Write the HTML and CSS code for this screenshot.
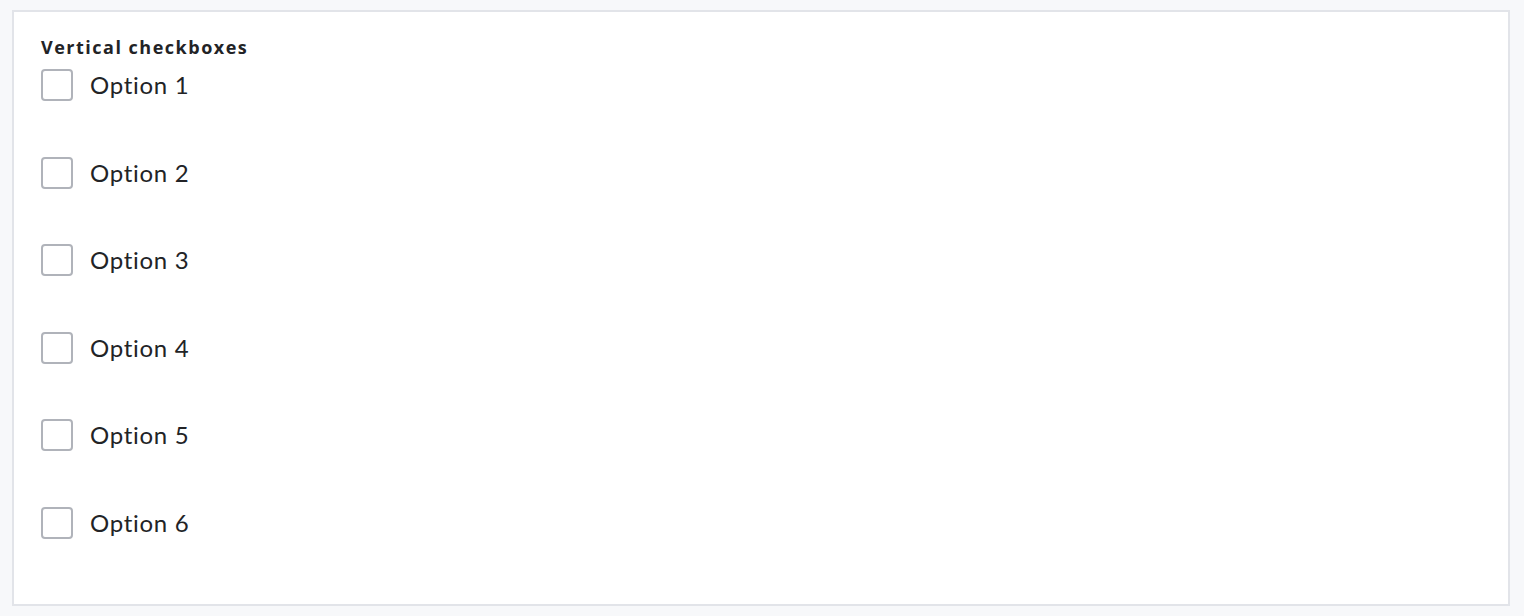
FILE: index.html
```
<!DOCTYPE html>
<html>
<head>
<meta charset="utf-8">
<link rel="stylesheet" href="styles.css">
</head>
<body>
<div class="card">
  <div class="title">Vertical checkboxes</div>
  <div class="list">
    <label class="opt"><span class="box"></span><span class="lbl">Option 1</span></label>
    <label class="opt"><span class="box"></span><span class="lbl">Option 2</span></label>
    <label class="opt"><span class="box"></span><span class="lbl">Option 3</span></label>
    <label class="opt"><span class="box"></span><span class="lbl">Option 4</span></label>
    <label class="opt"><span class="box"></span><span class="lbl">Option 5</span></label>
    <label class="opt"><span class="box"></span><span class="lbl">Option 6</span></label>
  </div>
</div>
</body>
</html>
```
FILE: styles.css
```
html, body {
  margin: 0;
  padding: 0;
}
body {
  background: #f7f8fa;
  font-family: Lato, "Noto Sans", sans-serif;
  color: #222326;
}
.card {
  box-sizing: border-box;
  margin: 10px 14px 10px 12px;
  height: 596px;
  background: #fff;
  border: 2px solid #e2e4e9;
  padding: 24px 27px 0 27px;
}
.title {
  font-family: "Open Sans", Lato, sans-serif;
  font-size: 18px;
  font-weight: 700;
  line-height: 22px;
  letter-spacing: 1.5px;
}
.list {
  margin-top: 11px;
  display: flex;
  flex-direction: column;
  gap: 55.6px;
}
.opt {
  display: flex;
  align-items: center;
  height: 32px;
}
.box {
  box-sizing: border-box;
  width: 32px;
  height: 32px;
  border: 2px solid #b0b3ba;
  border-radius: 4px;
  background: #fff;
  flex: none;
}
.lbl {
  margin-left: 17px;
  font-size: 24px;
  line-height: 32px;
  letter-spacing: 0.7px;
}
```
